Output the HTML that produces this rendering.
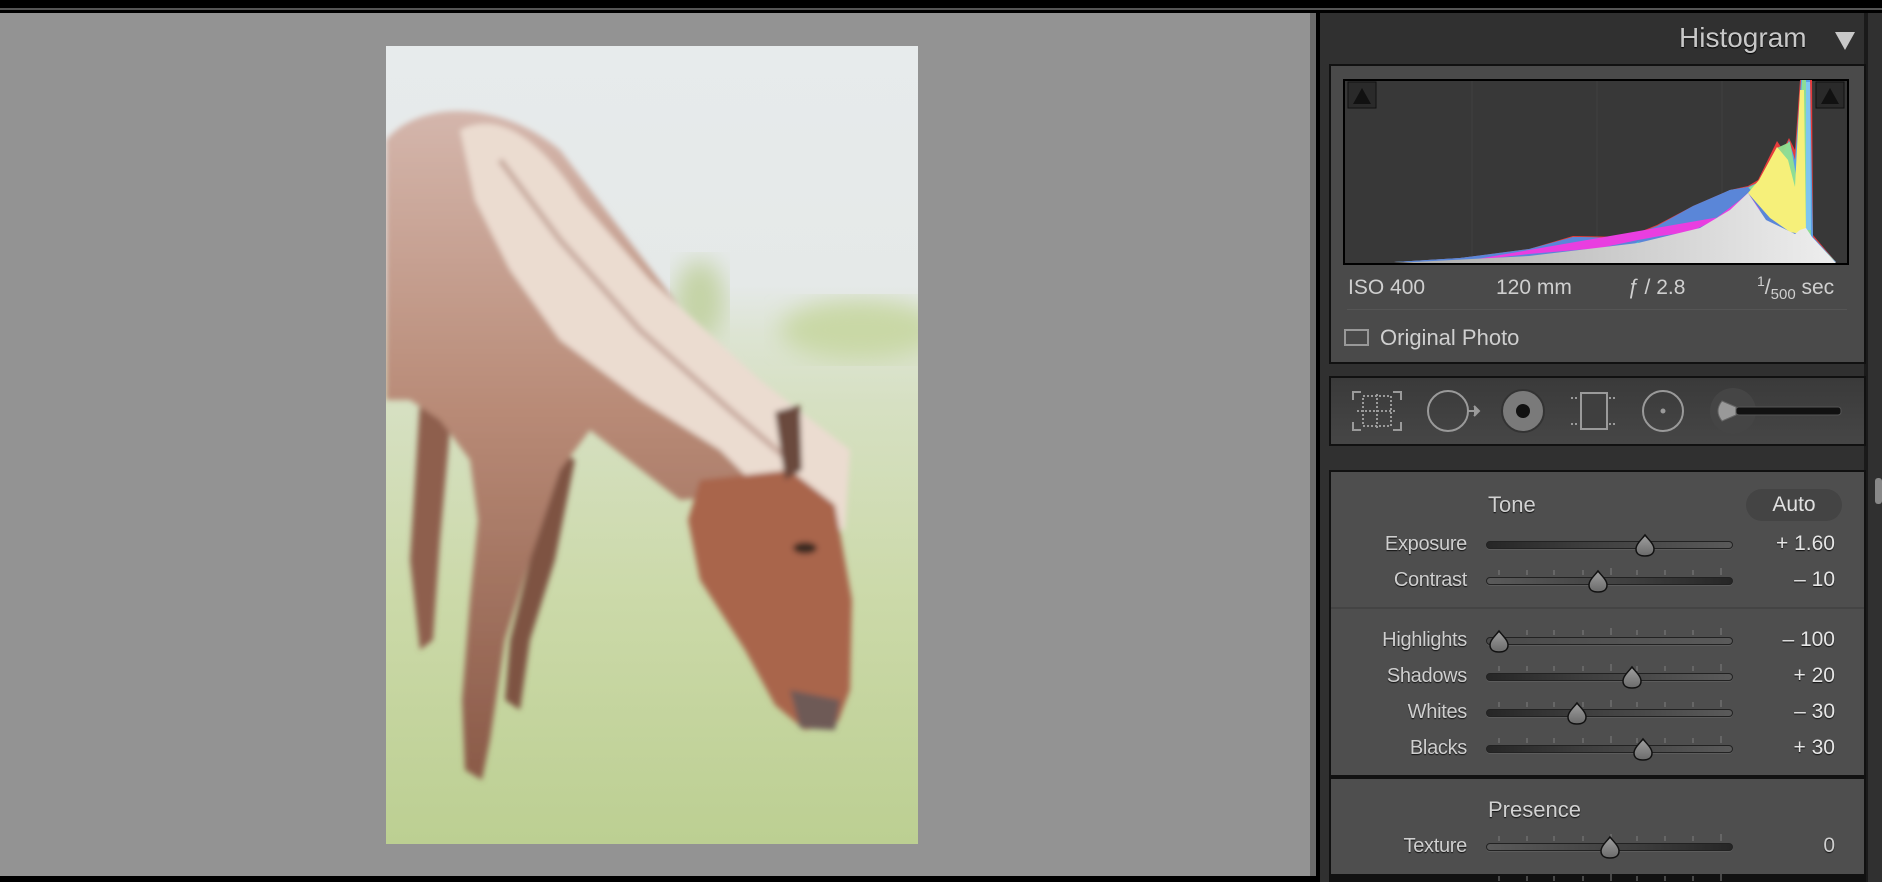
<!DOCTYPE html>
<html><head><meta charset="utf-8"><style>
*{margin:0;padding:0;box-sizing:border-box}
body{width:1882px;height:882px;overflow:hidden;background:#2e2e2e;position:relative;font-family:"Liberation Sans",sans-serif}
.a{position:absolute}
.lbl{position:absolute;right:415px;font-size:20px;color:#cfcfcf;text-shadow:0 1px 1px #111;line-height:22px;letter-spacing:-0.3px}
.val{position:absolute;right:47px;font-size:21px;color:#e6e6e6;text-shadow:0 1px 1px #111;line-height:22px}
.track{position:absolute;left:1486px;width:247px;height:8px;border-radius:4px;background:linear-gradient(to right,#262626,#3e3e3e 40%,#5a5a5a);border:1px solid #222;box-shadow:0 1px 0 #5c5c5c}
</style></head><body>
<div class="a" style="left:0;top:0;width:1882px;height:8px;background:#000"></div>
<div class="a" style="left:0;top:8px;width:1882px;height:2px;background:#555"></div>
<div class="a" style="left:0;top:10px;width:1882px;height:3px;background:#000"></div>
<div class="a" style="left:0;top:13px;width:1310px;height:863px;background:#939393"></div>
<div class="a" style="left:1310px;top:13px;width:6px;height:863px;background:#6c6c6c"></div>
<div class="a" style="left:1316px;top:13px;width:4px;height:869px;background:#000"></div>
<div class="a" style="left:0;top:876px;width:1316px;height:6px;background:#000"></div>
<svg class="a" style="left:386px;top:46px" width="532" height="798" viewBox="386 46 532 798">
<defs>
<linearGradient id="bg" x1="0" y1="0" x2="0" y2="1">
<stop offset="0" stop-color="#e7ebec"/><stop offset="0.3" stop-color="#e5e9e8"/><stop offset="0.36" stop-color="#dde4d3"/><stop offset="0.45" stop-color="#d6e0c2"/><stop offset="0.7" stop-color="#cbd9a8"/><stop offset="1" stop-color="#bccf92"/></linearGradient>
<linearGradient id="bd" x1="0" y1="0" x2="0" y2="1"><stop offset="0" stop-color="#d4b6ac"/><stop offset="0.45" stop-color="#b88a76"/><stop offset="1" stop-color="#8a5a48"/></linearGradient>
<filter id="bl"><feGaussianBlur stdDeviation="12"/></filter>
<filter id="sb"><feGaussianBlur stdDeviation="3"/></filter>
</defs>
<rect x="386" y="46" width="532" height="798" fill="url(#bg)"/>
<ellipse cx="860" cy="330" rx="80" ry="30" fill="#c9d8a6" filter="url(#bl)"/>
<ellipse cx="700" cy="300" rx="25" ry="40" fill="#c4d3a6" filter="url(#bl)"/>
<g filter="url(#sb)">
<path d="M420,400 L410,560 L420,650 L433,640 L440,540 L450,430 Z" fill="#8e5e4e"/>
<path d="M540,440 L530,560 L510,640 L505,700 L520,710 L530,640 L555,560 L575,460 Z" fill="#7e5343"/>
<path d="M386,140 C420,100 500,100 560,150 L720,360 L800,410 L790,490 L680,500 L590,430 L560,470 L530,560 L505,640 L490,740 L482,780 L465,770 L462,700 L470,600 L478,520 L470,460 L440,420 L410,400 L386,400 Z" fill="url(#bd)"/>
<path d="M460,130 C500,110 540,140 580,200 L650,280 L760,380 L850,450 L845,530 L790,520 L720,450 L640,400 L560,340 L510,270 L475,200 Z" fill="#ebdcd0"/>
<path d="M500,160 L560,240 L640,330 L730,410 L800,470" stroke="#c9aca0" stroke-width="6" fill="none"/>
<path d="M700,480 L790,470 L835,505 L852,600 L850,690 L838,722 L805,730 L775,705 L745,650 L700,580 L688,520 Z" fill="#a9654b"/>
<path d="M775,412 L800,405 L802,470 L785,480 Z" fill="#6a4a3c"/>
<ellipse cx="805" cy="548" rx="12" ry="6" fill="#3a2a24"/>
<path d="M790,690 L840,700 L835,730 L800,728 Z" fill="#6e5a56"/>
</g>
</svg>
<div class="a" style="left:1320px;top:13px;width:562px;height:869px;background:#303030"></div>
<div class="a" style="left:1864px;top:13px;width:4px;height:869px;background:#1a1a1a"></div>
<div class="a" style="left:1875px;top:478px;width:7px;height:26px;background:#888;border-radius:3px"></div>
<div class="a" style="left:1679px;top:22px;font-size:28px;color:#c8c8c8;text-shadow:0 1px 1px #000">Histogram</div>
<svg class="a" style="left:1834px;top:31px" width="22" height="20"><path d="M1,1 L21,1 L11,19 Z" fill="#c8c8c8"/></svg>
<div class="a" style="left:1329px;top:64px;width:537px;height:300px;background:#4a4a4a;border:2px solid #111"></div>
<div class="a" style="left:1347px;top:309px;width:500px;height:1px;background:#555"></div>
<svg class="a" style="left:1343px;top:79px" width="507" height="187" viewBox="1343 79 507 187">
<rect x="1344" y="80" width="504" height="184" fill="#383838" stroke="#000" stroke-width="2"/>
<g stroke="#404040" stroke-width="1">
<line x1="1472" y1="81" x2="1472" y2="263"/><line x1="1597" y1="81" x2="1597" y2="263"/><line x1="1722" y1="81" x2="1722" y2="263"/>
</g>
<path d="M1394,262 L1460,258 L1529,249 L1573,236 L1627,237 L1657,225 L1693,206 L1730,190 L1748,186 L1758,180 L1777,141 L1783,150 L1789,138 L1795,150 L1800,80 L1812,80 L1813,235 L1836,262 Z" fill="#e63c3c"/>
<path d="M1394,262 L1460,258 L1529,250 L1573,237 L1627,238 L1657,227 L1693,207 L1730,190 L1748,187 L1759,182 L1777,148 L1783,155 L1789,140 L1795,160 L1801,80 L1810,80 L1813,237 L1836,262 Z" fill="#5aa0e6"/>
<path d="M1394,262 L1460,259 L1529,252 L1573,240 L1627,240 L1657,230 L1693,210 L1730,192 L1748,188 L1759,182 L1777,148 L1790,142 L1796,175 L1802,80 L1806,80 L1811,237 L1836,262 Z" fill="#90e090" opacity="0.95"/>
<path d="M1394,262 L1460,258 L1529,249 L1573,237 L1627,238 L1657,226 L1693,206 L1730,190 L1748,187 L1760,200 L1780,215 L1836,262 Z" fill="#5a86d8"/>
<path d="M1460,262 L1529,254 L1600,248 L1638,240 L1660,236 L1690,232 L1711,222 L1740,200 L1748,193 L1760,210 Z" fill="#e93ee0"/>
<path d="M1540,256 L1600,250 L1630,246 L1640,241 L1630,250 Z" fill="#40d8d8"/>
<path d="M1748,193 L1759,180 L1777,147 L1788,160 L1795,187 L1800,90 L1804,90 L1806,235 L1790,232 L1770,218 Z" fill="#f6f07a"/>
<path d="M1806,82 L1810,82 L1811,230 L1806,230 Z" fill="#7ec6f0"/>
<defs><linearGradient id="gg" x1="0" x2="1"><stop offset="0" stop-color="#aaa"/><stop offset="1" stop-color="#eee"/></linearGradient></defs>
<path d="M1394,263 L1529,256 L1638,243 L1700,228 L1730,210 L1748,193 L1766,220 L1795,234 L1800,230 L1806,228 L1812,237 L1836,263 Z" fill="url(#gg)"/>
<rect x="1348" y="82" width="28" height="26" fill="#2a2a2a" stroke="#111"/><path d="M1353,104 L1362,88 L1371,104 Z" fill="#111"/>
<rect x="1816" y="82" width="28" height="26" fill="#2a2a2a" stroke="#111"/><path d="M1821,104 L1830,88 L1839,104 Z" fill="#111"/>
</svg>
<div class="a" style="left:1348px;top:276px;font-size:21px;color:#cfcfcf;white-space:nowrap">ISO 400</div>
<div class="a" style="left:1496px;top:276px;font-size:21px;color:#cfcfcf;white-space:nowrap">120 mm</div>
<div class="a" style="left:1627px;top:276px;font-size:21px;color:#cfcfcf;white-space:nowrap"><i>ƒ</i> / 2.8</div>
<div class="a" style="left:1757px;top:273px;font-size:21px;color:#cfcfcf;white-space:nowrap"><sup style="font-size:14px">1</sup>/<sub style="font-size:15px">500</sub> sec</div>
<div class="a" style="left:1344px;top:329px;width:25px;height:17px;border:2px solid #999"></div>
<div class="a" style="left:1380px;top:325px;font-size:22px;color:#cfcfcf">Original Photo</div>
<div class="a" style="left:1329px;top:376px;width:537px;height:70px;background:linear-gradient(#3a3a3a,#464646);border:2px solid #111"></div>
<svg class="a" style="left:1340px;top:385px" width="520" height="54" viewBox="1340 385 520 54" fill="none" stroke="#9a9a9a" stroke-width="2">
<path d="M1353,400 v-8 h8 M1393,392 h8 v8 M1353,422 v8 h8 M1393,430 h8 v-8" />
<rect x="1363" y="396" width="28" height="30" stroke-dasharray="2 2"/><line x1="1357" y1="411" x2="1397" y2="411" stroke-dasharray="2 2"/><line x1="1377" y1="394" x2="1377" y2="428" stroke-dasharray="2 2"/>
<circle cx="1448" cy="411" r="20"/><path d="M1468,411 h10 M1474,406 l5,5 l-5,5" fill="#9a9a9a"/>
<circle cx="1523" cy="411" r="21" fill="#7a7a7a" stroke="#333"/><circle cx="1523" cy="411" r="7" fill="#111" stroke="none"/>
<rect x="1581" y="393" width="26" height="36" fill="#3f3f3f"/><path d="M1571,398 h8 M1609,398 h8 M1571,424 h8 M1609,424 h8" stroke-dasharray="2 2"/>
<circle cx="1663" cy="411" r="20"/><circle cx="1663" cy="411" r="1.5" fill="#9a9a9a"/>
<circle cx="1733" cy="411" r="23" fill="#454545" stroke="none"/>
<path d="M1722,401 q-8,10 0,20 l14,-6 v-8 z" fill="#999" stroke="#666" stroke-width="1"/>
<rect x="1736" y="407" width="105" height="8" rx="3" fill="#111" stroke="#555" stroke-width="1"/>
</svg>
<div class="a" style="left:1329px;top:470px;width:537px;height:412px;background:#4e4e4e;border:2px solid #111"></div>
<div class="a" style="left:1331px;top:607px;width:533px;height:2px;background:#444"></div>
<div class="a" style="left:1331px;top:775px;width:533px;height:4px;background:#111"></div>
<div class="a" style="left:1331px;top:874px;width:533px;height:8px;background:#111"></div>
<div class="a" style="left:1488px;top:492px;font-size:22px;color:#d2d2d2;text-shadow:0 1px 1px #111">Tone</div>
<div class="a" style="left:1746px;top:489px;width:96px;height:32px;border-radius:16px;background:#444;color:#e0e0e0;font-size:21px;text-align:center;line-height:32px">Auto</div>
<div class="a" style="left:1488px;top:797px;font-size:22px;color:#d2d2d2;text-shadow:0 1px 1px #111">Presence</div>
<div class="lbl" style="top:533px">Exposure</div><div class="val" style="top:533px">+ 1.60</div>
<div class="lbl" style="top:569px">Contrast</div><div class="val" style="top:569px">– 10</div>
<div class="lbl" style="top:629px">Highlights</div><div class="val" style="top:629px">– 100</div>
<div class="lbl" style="top:665px">Shadows</div><div class="val" style="top:665px">+ 20</div>
<div class="lbl" style="top:701px">Whites</div><div class="val" style="top:701px">– 30</div>
<div class="lbl" style="top:737px">Blacks</div><div class="val" style="top:737px">+ 30</div>
<div class="lbl" style="top:835px">Texture</div><div class="val" style="top:835px;color:#cfcfcf">0</div>
<div class="track" style="top:541px"></div>
<div class="track" style="top:577px;background:linear-gradient(to right,#5a5a5a,#3e3e3e 60%,#262626)"></div>
<div class="track" style="top:637px;background:linear-gradient(to right,#4a4a4a,#5a5a5a)"></div>
<div class="track" style="top:673px"></div>
<div class="track" style="top:709px"></div>
<div class="track" style="top:745px"></div>
<div class="track" style="top:843px;background:linear-gradient(to right,#5a5a5a,#3e3e3e 60%,#262626)"></div>
<svg class="a" style="left:1480px;top:525px" width="260" height="357" viewBox="1480 525 260 357">
<g stroke="#7e7e7e" stroke-width="1">
<path d="M1499,570v5M1527,570v5M1554,570v5M1583,570v5M1611,568v7M1637,570v5M1665,570v5M1693,570v5M1721,568v7"/>
<path d="M1499,630v5M1527,630v5M1554,630v5M1583,630v5M1611,628v7M1637,630v5M1665,630v5M1693,630v5M1721,628v7"/>
<path d="M1499,666v5M1527,666v5M1554,666v5M1583,666v5M1611,664v7M1637,666v5M1665,666v5M1693,666v5M1721,664v7"/>
<path d="M1499,702v5M1527,702v5M1554,702v5M1583,702v5M1611,700v7M1637,702v5M1665,702v5M1693,702v5M1721,700v7"/>
<path d="M1499,738v5M1527,738v5M1554,738v5M1583,738v5M1611,736v7M1637,738v5M1665,738v5M1693,738v5M1721,736v7"/>
<path d="M1499,836v5M1527,836v5M1554,836v5M1583,836v5M1611,834v7M1637,836v5M1665,836v5M1693,836v5M1721,834v7"/>
<path d="M1499,876v5M1527,876v5M1554,876v5M1583,876v5M1611,874v7M1637,876v5M1665,876v5M1693,876v5M1721,874v7"/>
</g>
<defs><linearGradient id="th" x1="0" y1="0" x2="0" y2="1"><stop offset="0" stop-color="#a0a0a0"/><stop offset="1" stop-color="#6a6a6a"/></linearGradient>
<path id="t" d="M0,-10 C3,-6 9,-1 9,4 C9,9 5,11 0,11 C-5,11 -9,9 -9,4 C-9,-1 -3,-6 0,-10 Z" fill="url(#th)" stroke="#111" stroke-width="1.5"/></defs>
<use href="#t" x="1645" y="545"/>
<use href="#t" x="1598" y="581"/>
<use href="#t" x="1499" y="641"/>
<use href="#t" x="1632" y="677"/>
<use href="#t" x="1577" y="713"/>
<use href="#t" x="1643" y="749"/>
<use href="#t" x="1610" y="847"/>
</svg>
</body></html>
